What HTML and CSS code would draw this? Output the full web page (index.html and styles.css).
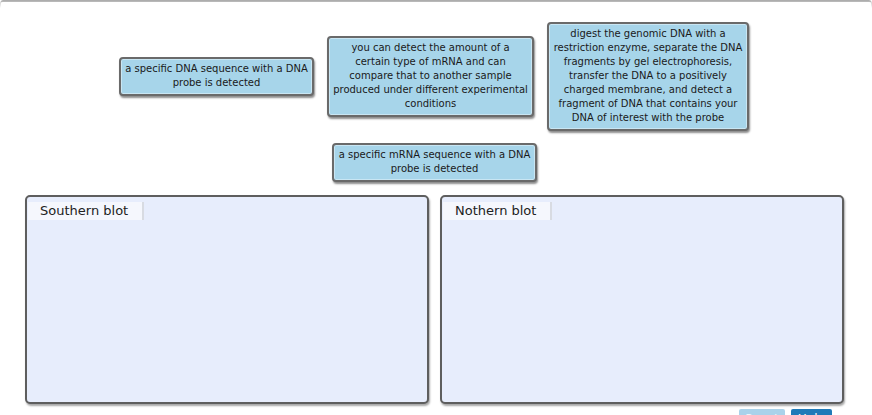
FILE: index.html
```html
<!DOCTYPE html>
<html>
<head>
<meta charset="utf-8">
<link rel="stylesheet" href="styles.css">
</head>
<body>
<div class="frame">
  <div class="frame-top"></div>
  <div class="tiles">
    <div class="tile-row">
      <div class="tile t1">a specific DNA sequence with a DNA probe is detected</div>
      <div class="tile t2">you can detect the amount of a certain type of mRNA and can compare that to another sample produced under different experimental conditions</div>
      <div class="tile t3">digest the genomic DNA with a restriction enzyme, separate the DNA fragments by gel electrophoresis, transfer the DNA to a positively charged membrane, and detect a fragment of DNA that contains your DNA of interest with the probe</div>
    </div>
    <div class="tile-row row2">
      <div class="tile t4">a specific mRNA sequence with a DNA probe is detected</div>
    </div>
  </div>
  <div class="zones">
    <div class="zone"><div class="zone-label">Southern blot</div></div>
    <div class="zone"><div class="zone-label">Nothern blot</div></div>
  </div>
  <div class="buttons">
    <div class="btn btn-reset">Reset</div>
    <div class="btn btn-help">Help</div>
  </div>
</div>
</body>
</html>
```
FILE: styles.css
```css
html, body {
  margin: 0;
  padding: 0;
  background: #ffffff;
  overflow: hidden;
}
body {
  width: 872px;
  height: 415px;
  font-family: "DejaVu Sans", Verdana, sans-serif;
}
.frame {
  width: 872px;
  height: 415px;
  overflow: hidden;
}
.frame-top {
  height: 6px;
  border-top: 2px solid #a8a8a8;
  border-left: 1px solid #c4c4c4;
  border-right: 1px solid #c4c4c4;
  border-radius: 3px 3px 0 0;
  -webkit-mask-image: linear-gradient(#000, transparent);
  mask-image: linear-gradient(#000, transparent);
}
.tiles {
  padding-top: 14px;
  padding-left: 119px;
}
.tile-row {
  display: flex;
  align-items: center;
  gap: 13px;
}
.row2 {
  margin-top: 12px;
  padding-left: 213px;
}
.tile {
  box-sizing: border-box;
  background: #a7d5ea;
  border: 2px solid #6a6a6a;
  border-radius: 4px;
  box-shadow: 1px 2px 2px rgba(0, 0, 0, 0.45), inset 0 0 0 1px #c9e6f3;
  color: #1a1a1a;
  font-size: 10px;
  line-height: 14px;
  text-align: center;
  padding: 3px 4px 4px;
}
.t1 { width: 195px; }
.t2 { width: 207px; }
.t3 { width: 202px; }
.t4 { width: 205px; }
.zones {
  display: flex;
  gap: 11px;
  padding-left: 25px;
  margin-top: 13px;
}
.zone {
  box-sizing: border-box;
  width: 404px;
  height: 209px;
  background: #e7edfc;
  border: 2px solid #5e5e5e;
  border-radius: 5px;
  box-shadow: 1px 2px 2px rgba(0, 0, 0, 0.35);
  padding: 3px 0 0 1px;
}
.zone-label {
  display: inline-block;
  height: 18px;
  line-height: 18px;
  padding: 0 14px 0 12px;
  background: #f5f7fd;
  border-right: 2px solid #d8dbe2;
  font-size: 13px;
  color: #222;
}
.buttons {
  display: flex;
  gap: 6px;
  padding-left: 739px;
  margin-top: 5px;
}
.btn {
  height: 20px;
  line-height: 20px;
  font-size: 12px;
  text-align: center;
  border-radius: 2px;
  color: #fff;
}
.btn-reset {
  width: 46px;
  background: #a9d2ea;
  color: #e8f4fb;
}
.btn-help {
  width: 41px;
  background: #1f7ab8;
}
```
